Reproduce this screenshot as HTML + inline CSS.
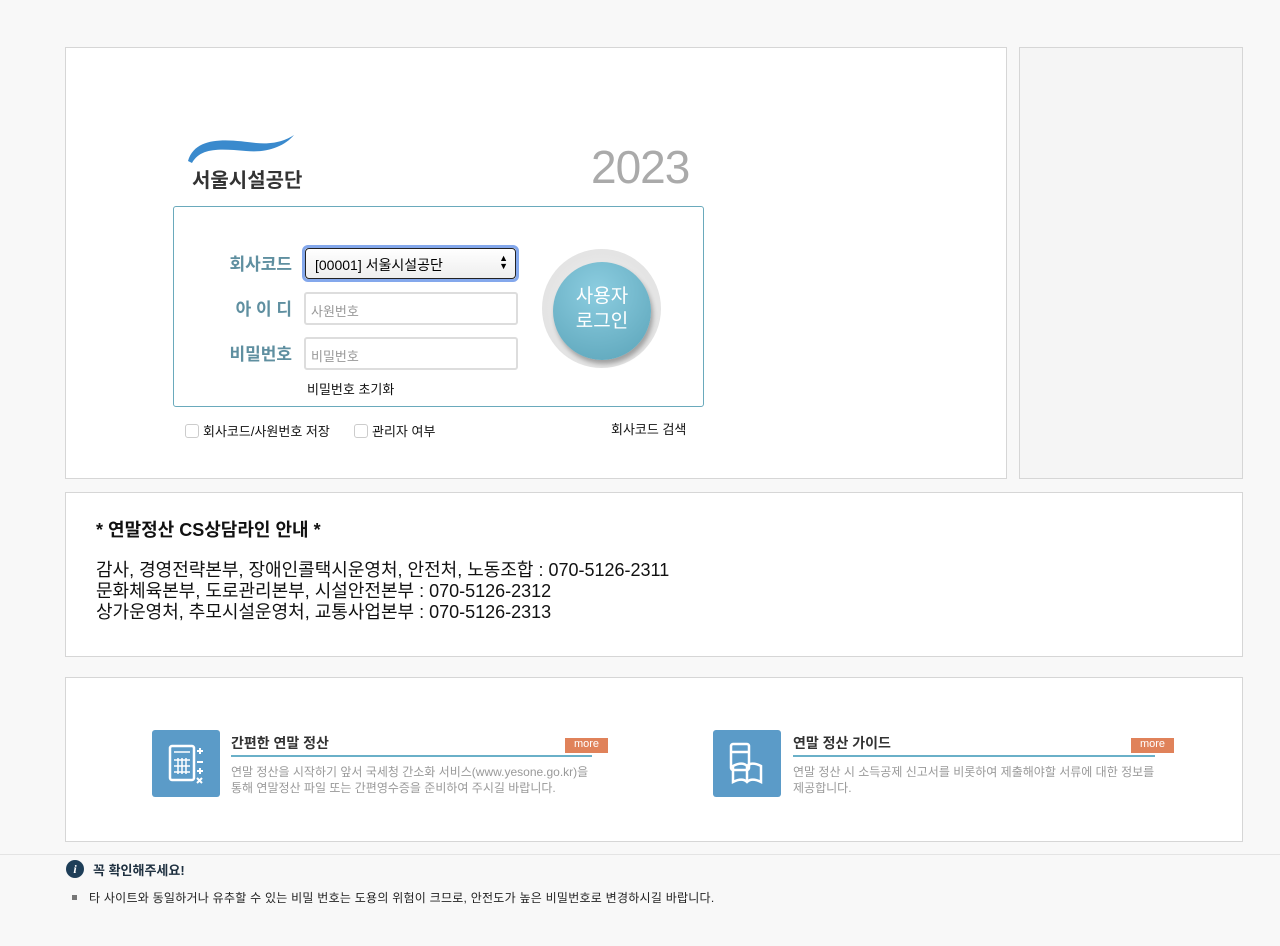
<!DOCTYPE html>
<html><head><meta charset="utf-8"><style>
*{box-sizing:border-box;margin:0;padding:0}
body{width:1280px;height:946px;background:#f8f8f8;font-family:"Liberation Sans","Noto Sans CJK KR",sans-serif;position:relative;overflow:hidden}
.box{position:absolute;background:#fff;border:1px solid #d6d6d6}
.abs{position:absolute}
.lbl{position:absolute;color:#5f8fa0;font-size:17px;font-weight:bold;text-align:right;width:90px}
.inp{position:absolute;left:304px;width:214px;height:33px;border:2px solid #ddd;border-radius:3px;color:#999;font-size:13px;padding:7px 5px;background:#fff}
.cb{position:absolute;width:14px;height:14px;border:1px solid #ccc;border-radius:3px;background:#fff}
.t{position:absolute;font-size:13px;color:#111;white-space:nowrap}
</style></head><body>
<div class="box" style="left:65px;top:47px;width:942px;height:432px"></div>
<div class="box" style="left:1019px;top:47px;width:224px;height:432px;background:#f5f5f5"></div>
<svg class="abs" style="left:186px;top:133px" width="120" height="62"><path d="M2 28 C10 0,50 8,70 10 C90 12,102 6,108 2 C98 14,80 20,60 18 C35 16,15 14,6 30 Z" fill="#3a8acd"/><text x="6" y="54" font-size="20" font-weight="bold" fill="#333" font-family="Noto Sans CJK KR">서울시설공단</text></svg>
<div class="abs" style="left:591px;top:140px;font-size:46px;color:#aaa;letter-spacing:-1px">2023</div>
<div class="abs" style="left:173px;top:206px;width:531px;height:201px;border:1px solid #6aaabc;border-radius:3px;background:#fff"></div>
<div class="lbl" style="left:202px;top:250px">회사코드</div>
<div class="lbl" style="left:202px;top:295px">아 이 디</div>
<div class="lbl" style="left:202px;top:340px">비밀번호</div>
<div class="abs" style="left:302px;top:245px;width:217px;height:37px;border:3px solid #84a8ec;border-radius:6px"><div style="border:1px solid #222;border-radius:4px;height:31px;background:linear-gradient(#fff,#eee);font-size:14px;padding:6px 9px;color:#000">[00001] 서울시설공단<span style="position:absolute;right:8px;top:6px;font-size:9px;line-height:8px">▲<br>▼</span></div></div>
<div class="inp" style="top:292px">사원번호</div>
<div class="inp" style="top:337px">비밀번호</div>
<div class="t" style="left:307px;top:379px">비밀번호 초기화</div>
<div class="abs" style="left:542px;top:249px;width:119px;height:119px;border-radius:50%;background:radial-gradient(#f2f2f2,#ddd)"></div>
<div class="abs" style="left:553px;top:262px;width:98px;height:98px;border-radius:50%;background:radial-gradient(circle at 45% 30%,#8ccde0,#5aa3b8);box-shadow:2px 4px 5px rgba(0,0,0,.3);color:#fff;font-size:19px;text-align:center;line-height:25px;padding-top:22px">사용자<br>로그인</div>
<div class="cb" style="left:185px;top:424px"></div><div class="t" style="left:203px;top:421px">회사코드/사원번호 저장</div>
<div class="cb" style="left:354px;top:424px"></div><div class="t" style="left:372px;top:421px">관리자 여부</div>
<div class="t" style="left:611px;top:419px">회사코드 검색</div>

<div class="box" style="left:65px;top:492px;width:1178px;height:165px"></div>
<div class="abs" style="left:96px;top:516px;font-size:18px;font-weight:bold;color:#111">* 연말정산 CS상담라인 안내 *</div>
<div class="abs" style="left:96px;top:560px;font-size:18px;color:#111;line-height:21px">감사, 경영전략본부, 장애인콜택시운영처, 안전처, 노동조합 : 070-5126-2311<br>문화체육본부, 도로관리본부, 시설안전본부 : 070-5126-2312<br>상가운영처, 추모시설운영처, 교통사업본부 : 070-5126-2313</div>

<div class="box" style="left:65px;top:677px;width:1178px;height:165px"></div>
<div class="abs" style="left:152px;top:730px;width:68px;height:67px;background:#5b9bc8;border-radius:3px"></div>
<svg class="abs" style="left:152px;top:730px" width="68" height="67" fill="none" stroke="#fff" stroke-width="2.5"><rect x="18" y="16" width="24" height="34" rx="2"/><path d="M22 22h16M22 30h16M22 36h16M22 42h16M26 28v16M30 28v16M34 28v16" stroke-width="1.5"/><path d="M48 18v6M45 21h6M45 32h6M48 38v6M45 41h6M45 48l5 5M50 48l-5 5" stroke-width="2"/></svg>
<div class="t" style="left:231px;top:733px;font-size:14px;font-weight:bold;color:#333">간편한 연말 정산</div>
<div class="abs" style="left:565px;top:738px;width:43px;height:15px;background:#e0825a;color:#fff;font-size:11px;text-align:center">more</div>
<div class="abs" style="left:231px;top:755px;width:361px;height:2px;background:#6ab0c8"></div>
<div class="abs" style="left:231px;top:764px;font-size:12px;color:#999;line-height:16px;white-space:nowrap">연말 정산을 시작하기 앞서 국세청 간소화 서비스(www.yesone.go.kr)을<br>통해 연말정산 파일 또는 간편영수증을 준비하여 주시길 바랍니다.</div>
<div class="abs" style="left:713px;top:730px;width:68px;height:67px;background:#5b9bc8;border-radius:3px"></div>
<svg class="abs" style="left:713px;top:730px" width="68" height="67" fill="none" stroke="#fff" stroke-width="2.5"><rect x="18" y="14" width="18" height="26" rx="2"/><path d="M18 22h18"/><path d="M20 52V36c6-3 11-3 14 0 3-3 8-3 14 0v16c-6-3-11-3-14 0-3-3-8-3-14 0zM34 36v16"/></svg>
<div class="t" style="left:793px;top:733px;font-size:14px;font-weight:bold;color:#333">연말 정산 가이드</div>
<div class="abs" style="left:1131px;top:738px;width:43px;height:15px;background:#e0825a;color:#fff;font-size:11px;text-align:center">more</div>
<div class="abs" style="left:793px;top:755px;width:362px;height:2px;background:#6ab0c8"></div>
<div class="abs" style="left:793px;top:764px;font-size:12px;color:#999;line-height:16px;white-space:nowrap">연말 정산 시 소득공제 신고서를 비롯하여 제출해야할 서류에 대한 정보를<br>제공합니다.</div>

<div class="abs" style="left:0;top:854px;width:1280px;height:1px;background:#e4e4e4"></div>
<div class="abs" style="left:66px;top:860px;width:18px;height:18px;border-radius:50%;background:#1e3e58;color:#fff;font-size:12px;font-style:italic;font-weight:bold;text-align:center;line-height:18px;font-family:'Liberation Serif',serif">i</div>
<div class="t" style="left:93px;top:860px;font-weight:bold;color:#1e3040">꼭 확인해주세요!</div>
<div class="abs" style="left:72px;top:895px;width:5px;height:5px;background:#777"></div>
<div class="t" style="left:89px;top:889px;font-size:12px;color:#222;letter-spacing:0.25px">타 사이트와 동일하거나 유추할 수 있는 비밀 번호는 도용의 위험이 크므로, 안전도가 높은 비밀번호로 변경하시길 바랍니다.</div>
</body></html>
